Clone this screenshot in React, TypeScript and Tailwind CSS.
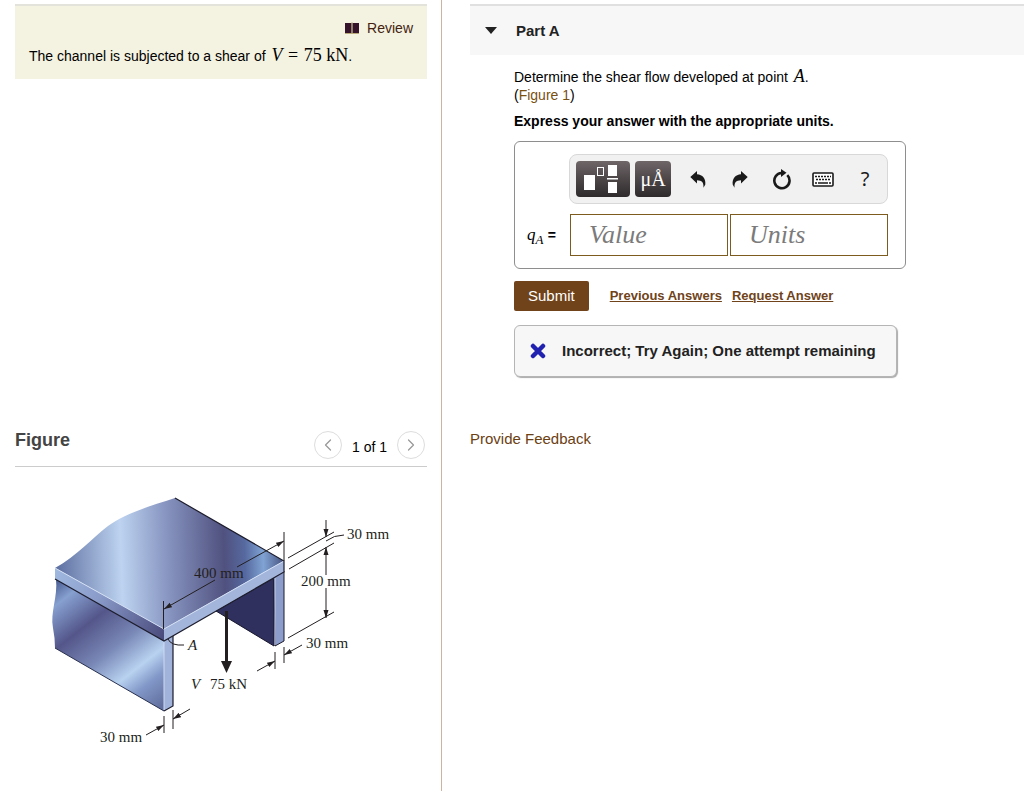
import type { ReactNode } from 'react';
import { ChevronLeft, ChevronRight } from 'lucide-react';

const BookIcon = () => (
  <svg viewBox="0 0 14 12" className="h-3 w-[14px]" aria-hidden="true">
    <path d="M0 1 H6.500 V11 H0 Z M7.500 1 H14 V11 H7.500 Z" fill="#35142b" />
    <path d="M7 0.500 V11.500" stroke="#8a7a4a" strokeWidth="1" />
    <path d="M0 11.500 H14" stroke="#b9a878" strokeWidth="1" />
  </svg>
);

const TemplateIcon = () => (
  <svg viewBox="0 0 54 36" className="h-9 w-[54px]" aria-hidden="true">
    <rect x="8" y="14" width="11" height="15" fill="#fff" />
    <rect x="21.500" y="6.500" width="6" height="8" fill="none" stroke="#fff" strokeWidth="1" />
    <rect x="32" y="4" width="9" height="11" fill="#fff" />
    <rect x="31" y="17" width="11" height="1.500" fill="#fff" />
    <rect x="32" y="21" width="9" height="11" fill="#fff" />
  </svg>
);

const UndoIcon = () => (
  <svg viewBox="0 0 16 17" className="h-[17px] w-4" fill="#1a1a1a" aria-hidden="true">
    <path d="M0.300 6 L7 0 V3.300 C12.500 3.800 16 7.500 15.300 13.500 L13.500 16.800 C13.800 11.500 12 9.500 7 9.300 V12.500 Z" />
  </svg>
);

const RedoIcon = () => (
  <svg viewBox="0 0 16 17" className="h-[17px] w-4" fill="#1a1a1a" aria-hidden="true">
    <path d="M15.700 6 L9 0 V3.300 C3.500 3.800 0 7.500 0.700 13.500 L2.500 16.800 C2.200 11.500 4 9.500 9 9.300 V12.500 Z" />
  </svg>
);

const ResetIcon = () => (
  <svg viewBox="0 0 20 21" className="h-[21px] w-5" aria-hidden="true">
    <path d="M15.300 6.200 A7.600 7.600 0 1 1 9.500 4" fill="none" stroke="#1a1a1a" strokeWidth="2.600" />
    <path d="M9 0 L14.500 3.800 L9 8 Z" fill="#1a1a1a" />
  </svg>
);

const KeyboardIcon = () => (
  <svg viewBox="0 0 22 15" className="h-[15px] w-[22px] shrink-0" aria-hidden="true">
    <rect x="1" y="1" width="20" height="13" rx="1" fill="#fff" stroke="#1a1a1a" strokeWidth="1.600" />
    <path d="M3 4.500 H19 M4 7.500 H19" stroke="#1a1a1a" strokeWidth="1.600" strokeDasharray="2 1" />
    <path d="M3 11 H5 M6 11 H16 M17 11 H19" stroke="#1a1a1a" strokeWidth="1.600" />
  </svg>
);

const CrossIcon = () => (
  <svg viewBox="0 0 16 16" className="size-4" aria-hidden="true">
    <path d="M3 3 L13 13 M13 3 L3 13" stroke="#2222b0" strokeWidth="4.500" strokeLinecap="round" />
  </svg>
);

const ToolButton = ({ label, children }: { label: string; children: ReactNode }) => (
  <button type="button" aria-label={label} className="flex size-6 items-center justify-center">
    {children}
  </button>
);

const ChannelFigure = () => (
  <svg viewBox="0 0 412 270" className="mt-6 w-full" role="img" aria-label="Channel cross section">
    <defs>
      <linearGradient id="steelTop" gradientUnits="userSpaceOnUse" x1="55" y1="570" x2="284" y2="562">
        <stop offset="0" stopColor="#5b6d9f" />
        <stop offset="0.290" stopColor="#bdd3f0" />
        <stop offset="0.480" stopColor="#8a98c3" />
        <stop offset="0.740" stopColor="#50517f" />
        <stop offset="0.830" stopColor="#56699f" />
        <stop offset="0.910" stopColor="#80a3d4" />
        <stop offset="1" stopColor="#46527f" />
      </linearGradient>
      <linearGradient id="steelSide" gradientUnits="userSpaceOnUse" x1="50" y1="575" x2="156" y2="710">
        <stop offset="0" stopColor="#2f4078" />
        <stop offset="0.160" stopColor="#86a0d0" />
        <stop offset="0.360" stopColor="#54568a" />
        <stop offset="0.560" stopColor="#7887b6" />
        <stop offset="0.740" stopColor="#b8d2f0" />
        <stop offset="0.850" stopColor="#8298c8" />
        <stop offset="1" stopColor="#62709f" />
      </linearGradient>
      <linearGradient id="steelLip" gradientUnits="userSpaceOnUse" x1="55" y1="573" x2="164" y2="635">
        <stop offset="0" stopColor="#9fb8de" />
        <stop offset="0.400" stopColor="#8a9bca" />
        <stop offset="1" stopColor="#4a4c7d" />
      </linearGradient>
      <marker id="tip" viewBox="0 0 8 6" refX="8" refY="3" markerWidth="8" markerHeight="6" markerUnits="userSpaceOnUse" orient="auto">
        <path d="M0 0.500 L8 3 L0 5.500 Z" fill="#231f20" />
      </marker>
    </defs>
    <g transform="translate(-15 -491)">
      {/* Far web */}
      <path d="M216 611 L274 578 V646 Z" fill="#30305f" stroke="#17172d" strokeWidth="1" />
      <path d="M274 577 L284 571 V641 L275 646 Z" fill="#8d9dcb" stroke="#1c1c2c" strokeWidth="1" />
      <path d="M275 578 V645" stroke="#c3cdea" strokeWidth="1" />

      {/* Near web */}
      <path d="M56 579 C58 597 50 612 53 628 Q55 638 55 648 L164 711 V641 Z" fill="url(#steelSide)" />
      <path d="M55 648 L164 711" stroke="#27304f" strokeWidth="1" />
      <path d="M164 641 L173 636 V706 L164 711 Z" fill="#a1b2db" />
      <path d="M173 636 V706 L164 711" fill="none" stroke="#1c1c2c" strokeWidth="1.200" />
      <path d="M164 641 V710" stroke="#cfdaf0" strokeWidth="1" />

      {/* Top plate */}
      <path d="M55 568 C77 556 92 538 108 526 C124 514 150 506 175 498 L284 561 L164 629 Z" fill="url(#steelTop)" />
      <path d="M55 568 L164 629 V641 L55 579 Z" fill="url(#steelLip)" />
      <path d="M164 629 L284 561 V572 L164 641 Z" fill="#a3b5db" />
      <path d="M55 568 L164 629 L284 561" fill="none" stroke="#d3dff3" strokeWidth="1" />
      <path d="M175 498 L284 561 V572 L164 641 L55 579" fill="none" stroke="#1c1c2c" strokeWidth="1.200" />

      {/* Dimension lines */}
      <g fill="none" stroke="#231f20" strokeWidth="1">
        <path d="M163.500 601 V629 M284 532 V561" />
        <path d="M215 580 L164 609" markerEnd="url(#tip)" />
        <path d="M237 567 L284 541" markerEnd="url(#tip)" />
        <path d="M288 558 L334 532 M289 569 L334 543 M288 638 L334 612" />
        <path d="M326 520 V537" markerEnd="url(#tip)" />
        <path d="M326 541 Q334 535 344 535" />
        <path d="M326 575 V547" markerEnd="url(#tip)" />
        <path d="M326 588 V618" markerEnd="url(#tip)" />
        <path d="M302 645 L284 655" markerEnd="url(#tip)" />
        <path d="M257 671 L275 661" markerEnd="url(#tip)" />
        <path d="M284 647 V663 M275 652 V669" />
        <path d="M168 639 Q171 646 184 645" />
        <path d="M146 735 L164 725" markerEnd="url(#tip)" />
        <path d="M190 709 L173 719" markerEnd="url(#tip)" />
        <path d="M164 716 V733 M173 710 V729" />
      </g>
      <path d="M226.500 611 V664" stroke="#231f20" strokeWidth="3" />
      <path d="M221 661 H232 L226.500 673 Z" fill="#231f20" />

      <g fill="#231f20" className="font-['Liberation_Serif',serif] text-[15px]">
        <text x="194" y="578">400 mm</text>
        <text x="347" y="539">30 mm</text>
        <text x="301" y="586">200 mm</text>
        <text x="306" y="648">30 mm</text>
        <text x="100" y="742">30 mm</text>
        <text x="188" y="650" className="italic">A</text>
        <text x="191" y="689" className="italic">V</text>
        <text x="210" y="689">75 kN</text>
      </g>
    </g>
  </svg>
);

const ProblemPanel = () => (
  <aside className="flex flex-col border-r border-[#cdb3a0] pt-1 pr-[14px] pl-[15px]">
    <section className="border-t-2 border-[#e3e3dc] bg-[#f4f2e1] px-[14px] pt-3 pb-[13px]">
      <div className="flex justify-end">
        <a href="#review" className="flex items-center gap-2 text-[14px] leading-5 text-[#43230f]">
          <BookIcon />
          Review
        </a>
      </div>
      <p className="mt-2 text-[14px] leading-5">
        The channel is subjected to a shear of{' '}
        <span className="ml-[2px] font-['Liberation_Serif',serif] text-[18px] leading-none">
          <i>V</i> <span className="mx-px">=</span> 75 kN
        </span>
        .
      </p>
    </section>

    <section className="mt-[349px]">
      <header className="flex items-start justify-between border-b border-[#cccccc] pb-[7px]">
        <h2 className="text-[18px] leading-6 font-bold text-[#444444]">Figure</h2>
        <div className="mt-[3px] flex items-center gap-[10px] pr-[2px] text-[14px]">
          <button type="button" aria-label="Previous figure" className="flex size-7 items-center justify-center rounded-full border border-[#dddddd] text-[#999999]">
            <ChevronLeft className="size-5" strokeWidth={1.5} />
          </button>
          <span className="pt-1">1 of 1</span>
          <button type="button" aria-label="Next figure" className="flex size-7 items-center justify-center rounded-full border border-[#dddddd] text-[#999999]">
            <ChevronRight className="size-5" strokeWidth={1.5} />
          </button>
        </div>
      </header>
      <ChannelFigure />
    </section>
  </aside>
);

const AnswerBox = () => (
  <div className="mt-[10px] w-fit rounded-md border border-[#8e8e8e] py-3 pr-[17px] pl-3">
    <div className="ml-[42px] flex items-center rounded-lg border border-[#d8d8d8] bg-[#f1f1f1] p-[6px]">
      <button type="button" aria-label="Templates" className="rounded-[4px] bg-linear-to-b from-[#6f6668] to-[#2e2a2b]">
        <TemplateIcon />
      </button>
      <button type="button" aria-label="Symbols" className="ml-[5px] h-9 w-9 rounded-[4px] bg-linear-to-b from-[#6f6668] to-[#2e2a2b] font-['Liberation_Serif',serif] text-[20px] text-white">
        μÅ
      </button>
      <div className="flex flex-1 items-center justify-between pr-1 pl-[15px]">
        <ToolButton label="Undo"><UndoIcon /></ToolButton>
        <ToolButton label="Redo"><RedoIcon /></ToolButton>
        <ToolButton label="Reset"><ResetIcon /></ToolButton>
        <ToolButton label="Keyboard shortcuts"><KeyboardIcon /></ToolButton>
        <ToolButton label="Help">
          <span className="font-['Noto_Sans',sans-serif] text-[20px] leading-6 text-[#1a1a1a]">?</span>
        </ToolButton>
      </div>
    </div>
    <div className="mt-[10px] flex items-center">
      <label htmlFor="value" className="w-[43px] font-['Liberation_Serif',serif] text-[17px]">
        <i>q<sub className="text-[13px]">A</sub></i> <span className="font-['Liberation_Sans',sans-serif] text-[14px] font-bold">=</span>
      </label>
      <input
        id="value"
        placeholder="Value"
        className="h-[42px] w-[158px] border border-[#7d5a1e] px-[18px] font-['Liberation_Serif',serif] text-[26px] italic placeholder:text-[#7b7b7b]"
      />
      <input
        aria-label="Units"
        placeholder="Units"
        className="ml-[2px] h-[42px] w-[158px] border border-[#7d5a1e] px-[18px] font-['Liberation_Serif',serif] text-[26px] italic placeholder:text-[#7b7b7b]"
      />
    </div>
  </div>
);

const PartPanel = () => (
  <main className="pt-1 pl-7">
    <header className="flex items-center border-t-2 border-[#e0e0e0] bg-[#f7f7f7] py-[14px] pl-[15px]">
      <button type="button" aria-label="Collapse Part A" className="flex w-[31px] items-center">
        <svg viewBox="0 0 12 7" className="h-[7px] w-3" aria-hidden="true">
          <path d="M0 0 H12 L6 7 Z" fill="#222222" />
        </svg>
      </button>
      <h2 className="text-[15px] leading-[21px] font-bold text-[#222222]">Part A</h2>
    </header>

    <div className="pt-3 pr-6 pl-11">
      <p className="text-[14px] leading-[18px]">
        Determine the shear flow developed at point{' '}
        <i className="ml-[2px] font-['Liberation_Serif',serif] text-[18px] leading-none">A</i>.
        <br />
        (<a href="#figure" className="text-[#7a4f10]">Figure 1</a>)
      </p>
      <p className="mt-[7px] text-[14px] leading-5 font-bold">Express your answer with the appropriate units.</p>

      <AnswerBox />

      <div className="mt-3 flex items-center">
        <button type="button" className="rounded-[2px] bg-[#70431a] px-[14px] py-[5px] text-[15px] leading-5 text-white">
          Submit
        </button>
        <a href="#previous" className="ml-[21px] text-[13px] font-bold text-[#70431a] underline">Previous Answers</a>
        <a href="#request" className="ml-[10px] text-[13px] font-bold text-[#70431a] underline">Request Answer</a>
      </div>

      <div role="status" className="mt-[14px] flex w-fit items-center gap-4 rounded-md border border-[#b5b5b5] bg-[#f7f7f7] py-[15px] pr-5 pl-[15px] shadow-[1px_1px_1px_0px_#aaaaaa]">
        <CrossIcon />
        <span className="text-[15px] leading-5 font-bold text-[#222222]">Incorrect; Try Again; One attempt remaining</span>
      </div>
    </div>

    <a href="#feedback" className="mt-[52px] inline-block text-[15px] leading-5 text-[#6b4012]">Provide Feedback</a>
  </main>
);

export default function App() {
  return (
    <div className="grid min-h-screen grid-cols-[442fr_582fr] bg-white font-['Liberation_Sans',Arial,sans-serif] text-black">
      <ProblemPanel />
      <PartPanel />
    </div>
  );
}
